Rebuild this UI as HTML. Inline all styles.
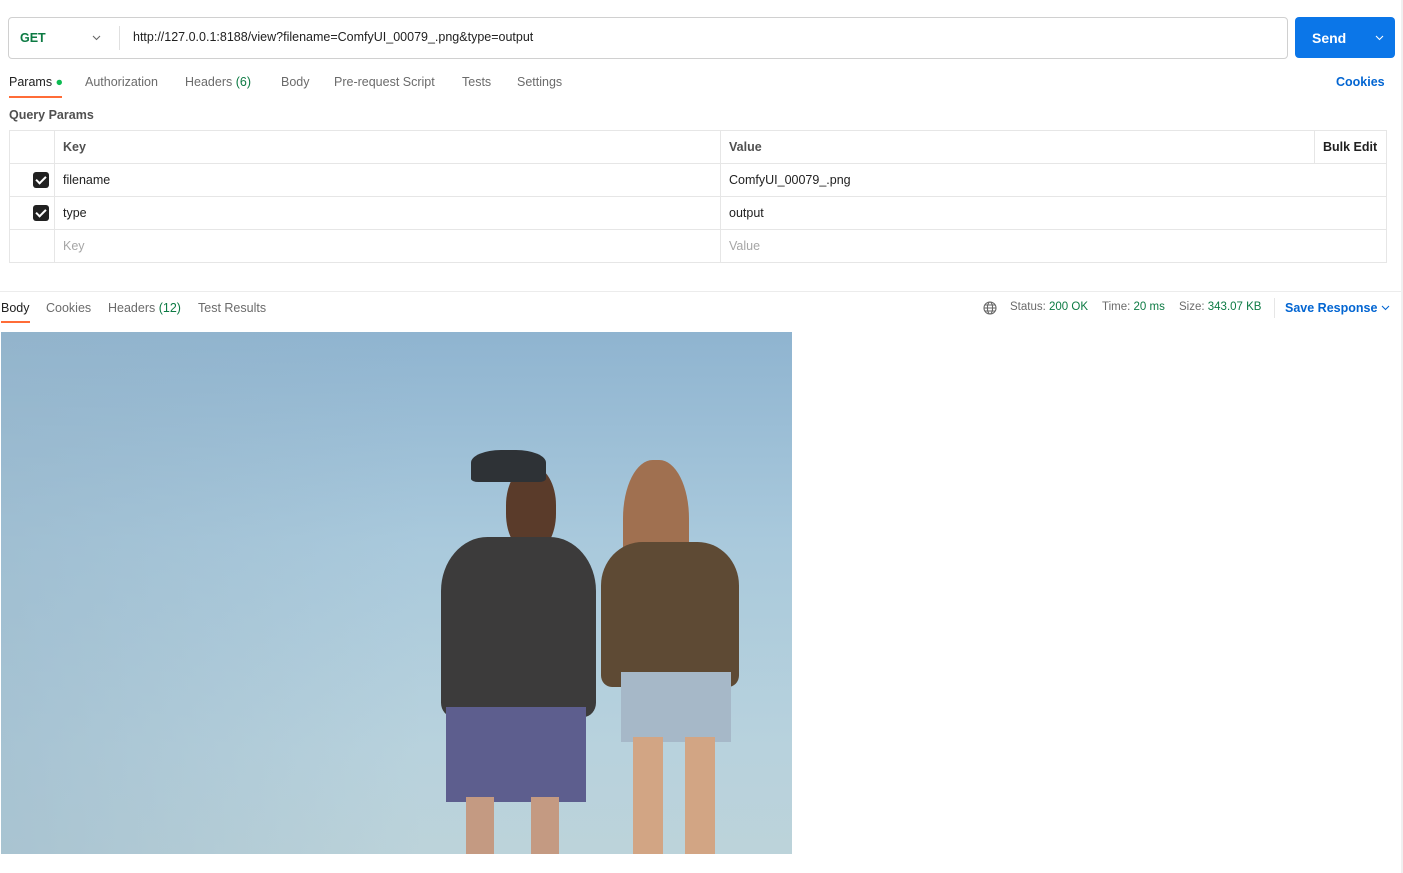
<!DOCTYPE html>
<html><head><meta charset="utf-8"><style>
*{box-sizing:border-box;margin:0;padding:0}
body{width:1403px;height:873px;background:#fff;font-family:"Liberation Sans",sans-serif;font-size:12.5px;color:#212121;position:relative;overflow:hidden}
.abs{position:absolute}
.urlbox{left:8px;top:17px;width:1280px;height:42px;border:1px solid #d0d0d0;border-radius:4px}
.send{left:1295px;top:17px;width:100px;height:41px;background:#0b76e8;border-radius:4px;color:#fff;font-weight:bold;font-size:14px}
.tab{top:75px;color:#6b6b6b;font-size:12.5px}
table{position:absolute;left:9px;top:130px;width:1378px;border-collapse:collapse}
td{border:1px solid #e6e6e6;height:33px;padding:0 8px;font-size:12.5px}
.cb{width:16px;height:16px;background:#212121;border-radius:3px;margin-left:15px;position:relative}
.cb:after{content:"";position:absolute;left:5px;top:2px;width:4px;height:8px;border:solid #fff;border-width:0 2px 2px 0;transform:rotate(45deg)}
.rt{top:301px;color:#6b6b6b}
.g{color:#0c7a43}
</style></head><body>
<div class="abs urlbox"></div>
<div class="abs" style="left:20px;top:31px;font-weight:bold;color:#0c7a43">GET</div>
<svg class="abs" style="left:92px;top:35px" width="9" height="6" viewBox="0 0 9 6" fill="none" stroke="#666" stroke-width="1.1"><path d="M1 1l3.5 3.5L8 1"/></svg>
<div class="abs" style="left:119px;top:26px;width:1px;height:24px;background:#e0e0e0"></div>
<div class="abs" style="left:133px;top:30px">http://127.0.0.1:8188/view?filename=ComfyUI_00079_.png&amp;type=output</div>
<div class="abs send"><span class="abs" style="left:17px;top:13px">Send</span><svg class="abs" style="left:80px;top:18px" width="9" height="6" viewBox="0 0 9 6" fill="none" stroke="#fff" stroke-width="1.1"><path d="M1 1l3.5 3.5L8 1"/></svg></div>
<div class="abs tab" style="left:9px;color:#212121">Params <span style="color:#0cbb52">●</span></div>
<div class="abs" style="left:9px;top:96px;width:53px;height:2px;background:#ff6c37"></div>
<div class="abs tab" style="left:85px">Authorization</div>
<div class="abs tab" style="left:185px">Headers <span class="g">(6)</span></div>
<div class="abs tab" style="left:281px">Body</div>
<div class="abs tab" style="left:334px">Pre-request Script</div>
<div class="abs tab" style="left:462px">Tests</div>
<div class="abs tab" style="left:517px">Settings</div>
<div class="abs tab" style="left:1336px;color:#0265d2;font-weight:bold">Cookies</div>
<div class="abs" style="left:9px;top:108px;font-weight:bold;color:#505050">Query Params</div>
<table>
<tr><td style="width:45px"></td><td style="width:666px;font-weight:bold;color:#505050">Key</td><td style="width:594px;font-weight:bold;color:#505050">Value</td><td style="font-weight:bold">Bulk Edit</td></tr>
<tr><td style="padding:0"><div class="cb" style="margin-left:23px"></div></td><td>filename</td><td colspan="2">ComfyUI_00079_.png</td></tr>
<tr><td style="padding:0"><div class="cb" style="margin-left:23px"></div></td><td>type</td><td colspan="2">output</td></tr>
<tr><td></td><td style="color:#a6a6a6">Key</td><td colspan="2" style="color:#a6a6a6">Value</td></tr>
</table>
<div class="abs" style="left:0;top:291px;width:1403px;height:1px;background:#ececec"></div>
<div class="abs" style="left:1401px;top:0;width:2px;height:873px;background:#f0f0f0"></div>
<div class="abs rt" style="left:1px;color:#212121">Body</div>
<div class="abs" style="left:1px;top:321px;width:29px;height:2px;background:#ff6c37"></div>
<div class="abs rt" style="left:46px">Cookies</div>
<div class="abs rt" style="left:108px">Headers <span class="g">(12)</span></div>
<div class="abs rt" style="left:198px">Test Results</div>
<svg class="abs" style="left:983px;top:301px" width="14" height="14" viewBox="0 0 14 14" fill="none" stroke="#666" stroke-width="1.1"><circle cx="7" cy="7" r="6"/><ellipse cx="7" cy="7" rx="2.6" ry="6"/><path d="M1 7h12M2 4h10M2 10h10"/></svg>
<div class="abs rt" style="left:1010px;font-size:11.5px">Status: <span class="g">200 OK</span></div>
<div class="abs rt" style="left:1102px;font-size:11.5px">Time: <span class="g">20 ms</span></div>
<div class="abs rt" style="left:1179px;font-size:11.5px">Size: <span class="g">343.07 KB</span></div>
<div class="abs" style="left:1274px;top:298px;width:1px;height:20px;background:#e6e6e6"></div>
<div class="abs rt" style="left:1285px;color:#0265d2;font-weight:bold">Save Response</div>
<svg class="abs" style="left:1381px;top:305px" width="9" height="6" viewBox="0 0 9 6" fill="none" stroke="#0265d2" stroke-width="1.1"><path d="M1 1l3.5 3.5L8 1"/></svg>
<div class="abs" style="left:1px;top:332px;width:791px;height:522px;background:linear-gradient(180deg,#8fb4d0 0%,#a9c9dc 40%,#b8d2dd 80%,#bcd3da 100%);overflow:hidden">
 <div class="abs" style="left:0;top:0;width:420px;height:522px;background:linear-gradient(90deg,rgba(150,180,200,.5),rgba(0,0,0,0))"></div>
 <div class="abs" style="left:505px;top:135px;width:50px;height:85px;border-radius:45%;background:#5a3b2a"></div>
 <div class="abs" style="left:470px;top:118px;width:75px;height:32px;border-radius:40% 40% 10% 10%;background:#2e3236"></div>
 <div class="abs" style="left:440px;top:205px;width:155px;height:180px;border-radius:30% 30% 8% 8%;background:#3c3b3b"></div>
 <div class="abs" style="left:445px;top:375px;width:140px;height:95px;background:#5d5e8e"></div>
 <div class="abs" style="left:465px;top:465px;width:28px;height:57px;background:#c49a82"></div>
 <div class="abs" style="left:530px;top:465px;width:28px;height:57px;background:#c49a82"></div>
 <div class="abs" style="left:622px;top:128px;width:66px;height:130px;border-radius:45% 45% 20% 20%;background:#a07050"></div>
 <div class="abs" style="left:600px;top:210px;width:138px;height:145px;border-radius:30% 30% 8% 8%;background:#5e4a34"></div>
 <div class="abs" style="left:620px;top:340px;width:110px;height:70px;background:#a6b8c8"></div>
 <div class="abs" style="left:632px;top:405px;width:30px;height:117px;background:#d2a584"></div>
 <div class="abs" style="left:684px;top:405px;width:30px;height:117px;background:#d2a584"></div>
</div>
</body></html>
